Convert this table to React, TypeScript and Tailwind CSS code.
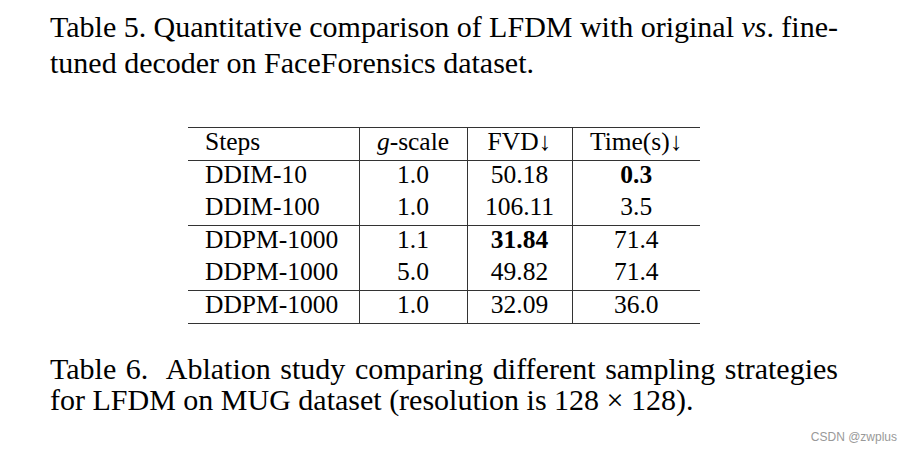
const rows = [
  { steps: 'DDIM-10', g: '1.0', fvd: '50.18', time: '0.3', boldTime: true },
  { steps: 'DDIM-100', g: '1.0', fvd: '106.11', time: '3.5', groupEnd: true },
  { steps: 'DDPM-1000', g: '1.1', fvd: '31.84', time: '71.4', boldFvd: true },
  { steps: 'DDPM-1000', g: '5.0', fvd: '49.82', time: '71.4', groupEnd: true },
  { steps: 'DDPM-1000', g: '1.0', fvd: '32.09', time: '36.0' },
];

export default function App() {
  return (
    <div
      className="relative w-[907px] h-[454px] bg-white text-black overflow-hidden"
      style={{ fontFamily: '"Liberation Serif", "Times New Roman", serif' }}
    >
      {/* Table 5 caption (tail of previous table) */}
      <div className="ml-[50px] w-[788px] pt-[9px] text-[30px] leading-[36px]">
        <p className="whitespace-nowrap text-justify [text-align-last:justify] [word-spacing:-4px]">
          Table 5. Quantitative comparison of LFDM with original <i>vs</i>. fine-
        </p>
        <p>tuned decoder on FaceForensics dataset.</p>
      </div>

      {/* Table */}
      <table className="ml-[188px] mt-[46px] border-collapse text-[25.5px] leading-[28px]">
        <thead>
          <tr className="h-[32.5px] border-t border-b border-[#333]">
            <th className="w-[171px] pl-[17px] pb-[4px] text-left font-normal border-r border-[#333]">Steps</th>
            <th className="w-[108px] pb-[4px] text-center font-normal border-r border-[#333]">
              <i>g</i>-scale
            </th>
            <th className="w-[105px] pb-[4px] text-center font-normal border-r border-[#333]">FVD↓</th>
            <th className="w-[128px] pb-[4px] text-center font-normal">Time(s)↓</th>
          </tr>
        </thead>
        <tbody>
          {rows.map((r, i) => (
            <tr
              key={i}
              className={`h-[32.5px] ${r.groupEnd || i === rows.length - 1 ? 'border-b border-[#333]' : ''}`}
            >
              <td className="pl-[17px] pb-[4px] text-left border-r border-[#333]">{r.steps}</td>
              <td className="pb-[4px] text-center border-r border-[#333]">{r.g}</td>
              <td className={`pb-[4px] text-center border-r border-[#333] ${r.boldFvd ? 'font-bold' : ''}`}>{r.fvd}</td>
              <td className={`pb-[4px] text-center ${r.boldTime ? 'font-bold' : ''}`}>{r.time}</td>
            </tr>
          ))}
        </tbody>
      </table>

      {/* Table 6 caption */}
      <div className="ml-[50px] w-[788px] mt-[29px] text-[30px] leading-[31px]">
        <p className="whitespace-nowrap text-justify [text-align-last:justify]">
          Table 6.&nbsp; Ablation study comparing different sampling strategies
        </p>
        <p>for LFDM on MUG dataset (resolution is 128 × 128).</p>
      </div>

      {/* watermark */}
      <div
        className="absolute right-[10px] bottom-[8px] text-[12px] text-[#999]"
        style={{ fontFamily: '"Liberation Sans", Arial, sans-serif' }}
      >
        CSDN @zwplus
      </div>
    </div>
  );
}
